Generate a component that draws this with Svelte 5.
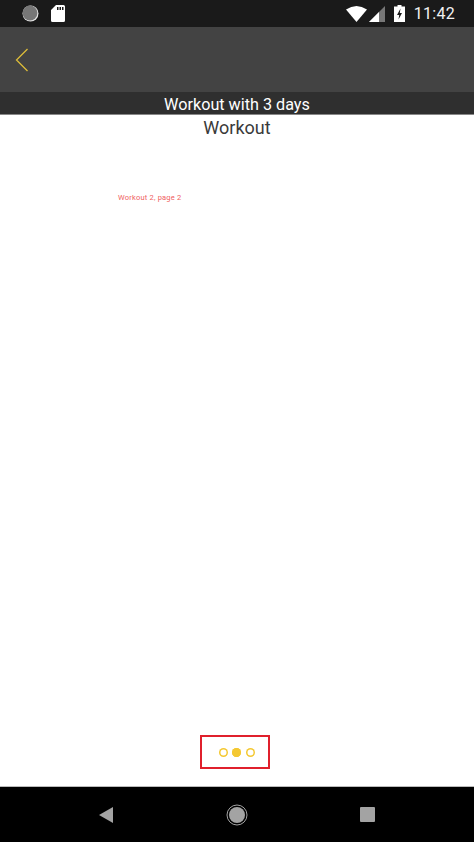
<script>
  let dots = [false, true, false];
</script>

<div class="screen">
  <div class="status">
    <div class="status-left">
      <svg class="sync" width="17" height="17" viewBox="0 0 17 17">
        <circle cx="8.5" cy="8.5" r="8" fill="#e4e4e4" />
        <circle cx="8" cy="8" r="7.4" fill="#777" />
      </svg>
      <svg class="sd" width="14" height="17" viewBox="0 0 14 17">
        <path d="M5 0H12.500A1.500 1.500 0 0 1 14 1.500V15.500A1.500 1.500 0 0 1 12.500 17H1.500A1.500 1.500 0 0 1 0 15.500V5Z" fill="#fff" />
        <path d="M6 2h1.500v3H6zM8.500 2H10v3H8.500zM11 2h1.500v3H11z" fill="#1a1a1a" />
      </svg>
    </div>
    <div class="status-right">
      <svg width="21" height="16" viewBox="0 0 21 16"><path d="M0 3.500Q10.500 -3.500 21 3.500L10.500 16Z" fill="#fff" /></svg>
      <svg class="signal" width="16" height="16" viewBox="0 0 16 16">
        <path d="M0 16L16 0V16Z" fill="#777" />
        <path d="M0 16L10 6V16Z" fill="#fff" />
      </svg>
      <svg class="battery" width="11" height="17" viewBox="0 0 11 17">
        <path d="M3.500 0h4v1.500H11V17H0V1.500h3.500Z" fill="#fff" />
        <path d="M6.500 3.500L3 10h2.200L4.500 14.500 8 8H5.800Z" fill="#1a1a1a" />
      </svg>
      <span class="time">11:42</span>
    </div>
  </div>

  <header class="toolbar">
    <svg width="14" height="24" viewBox="0 0 14 24">
      <path d="M12.500 1L1.500 12L12.500 23" fill="none" stroke="#dcbc3a" stroke-width="1.300" />
    </svg>
  </header>
  <div class="subtitle">Workout with 3 days</div>

  <main class="content">
    <h1>Workout</h1>
    <p class="note">Workout 2, page 2</p>
    <div class="pager-wrap">
      <div class="pager">
        {#each dots as active}
          <span class="dot" class:active></span>
        {/each}
      </div>
    </div>
  </main>

  <nav class="navbar">
    <svg width="15" height="16" viewBox="0 0 15 16"><path d="M14 0V16L0 8Z" fill="#a3a3a3" /></svg>
    <svg width="22" height="22" viewBox="0 0 22 22">
      <circle cx="11" cy="11" r="10" fill="none" stroke="#a3a3a3" stroke-width="1" />
      <circle cx="11" cy="11" r="8" fill="#a3a3a3" />
    </svg>
    <svg width="15" height="15" viewBox="0 0 15 15"><rect width="15" height="15" rx="1" fill="#a3a3a3" /></svg>
  </nav>
</div>

<style>
  :global(body) {
    margin: 0;
    background: #fff;
  }

  .screen {
    width: 474px;
    height: 842px;
    display: flex;
    flex-direction: column;
    font-family: Roboto, "Liberation Sans", sans-serif;
    overflow: hidden;
  }

  .status {
    height: 27px;
    background: #1a1a1a;
    display: flex;
    align-items: center;
    justify-content: space-between;
    padding: 0 19px 0 22px;
    flex: none;
  }

  .status-left {
    display: flex;
    align-items: center;
    gap: 12px;
  }

  .status-right {
    display: flex;
    align-items: center;
  }

  .signal {
    margin-left: 2px;
  }

  .battery {
    margin-left: 9px;
  }

  .time {
    margin-left: 9px;
    color: #f2f2f2;
    font-size: 16px;
    letter-spacing: 0.3px;
  }

  .toolbar {
    height: 65px;
    background: #434343;
    display: flex;
    align-items: center;
    padding-left: 15px;
    flex: none;
  }

  .subtitle {
    height: 22px;
    line-height: 25px;
    background: #2f2f2f;
    border-bottom: 1px solid #888;
    box-sizing: content-box;
    color: #fff;
    font-size: 16.200px;
    text-align: center;
    flex: none;
  }

  .content {
    flex: 1;
    display: flex;
    flex-direction: column;
    background: #fff;
  }

  h1 {
    margin: 0;
    padding-top: 1px;
    color: #3a3a3a;
    font-size: 18px;
    font-weight: 400;
    line-height: 23px;
    text-align: center;
  }

  .note {
    margin: 53px 0 0 118px;
    color: #f0625f;
    font-size: 7.500px;
    line-height: 12px;
    letter-spacing: 0.2px;
  }

  .pager-wrap {
    margin-top: auto;
    margin-bottom: 17px;
    display: flex;
    justify-content: center;
    padding-right: 4px;
  }

  .pager {
    width: 70px;
    height: 34px;
    box-sizing: border-box;
    border: 2px solid #e0202c;
    padding-left: 3px;
    display: flex;
    align-items: center;
    justify-content: center;
    gap: 4.500px;
  }

  .dot {
    width: 9px;
    height: 9px;
    box-sizing: content-box;
    border-radius: 50%;
    box-shadow: inset 0 0 0 1.500px #f4c832;
  }

  .dot.active {
    background: #f4c832;
  }

  .navbar {
    height: 55px;
    background: #000;
    border-top: 1px solid #bbb;
    display: flex;
    align-items: center;
    justify-content: space-between;
    padding: 0 99px;
    flex: none;
  }
</style>
